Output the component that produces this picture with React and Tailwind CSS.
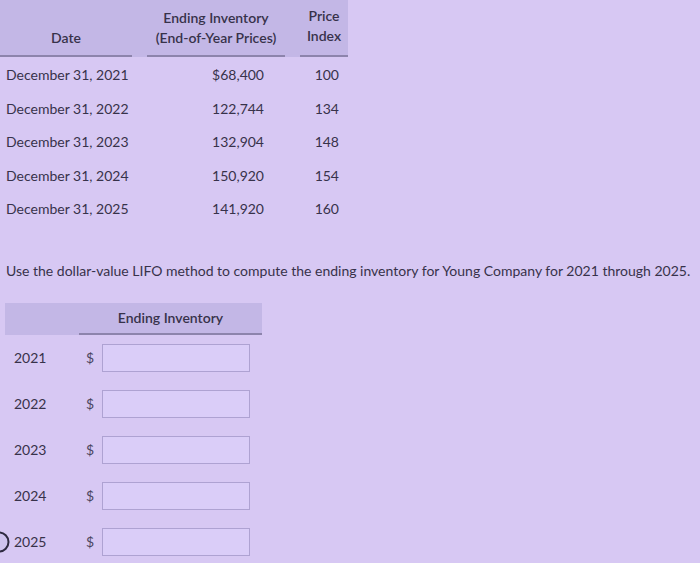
import React from "react";

const rows = [
  { date: "December 31, 2021", inv: "$68,400", idx: "100" },
  { date: "December 31, 2022", inv: "122,744", idx: "134" },
  { date: "December 31, 2023", inv: "132,904", idx: "148" },
  { date: "December 31, 2024", inv: "150,920", idx: "154" },
  { date: "December 31, 2025", inv: "141,920", idx: "160" },
];

const years = ["2021", "2022", "2023", "2024", "2025"];

function App() {
  return (
    <div
      className="w-[700px] h-[563px] bg-[#d7c8f3] text-[#37324a] text-[14px] overflow-hidden relative"
      style={{ fontFamily: "Lato, 'Open Sans', sans-serif" }}
    >
      {/* Top table */}
      <div className="w-[348px]">
        <div className="bg-[#c3b7e6] grid grid-cols-[132px_138px_48px] gap-x-[15px] h-[57px] font-semibold">
          <div className="flex items-end justify-center pb-[7px] border-b-2 border-[#8d84ac]">Date</div>
          <div className="flex flex-col items-center justify-end pb-[7px] leading-[20px] border-b-2 border-[#8d84ac]">
            <span>Ending Inventory</span>
            <span>(End-of-Year Prices)</span>
          </div>
          <div className="flex flex-col items-center justify-end pb-[9px] leading-[20px] border-b-2 border-[#8d84ac]">
            <span>Price</span>
            <span>Index</span>
          </div>
        </div>
        <div className="grid grid-cols-[132px_138px_48px] gap-x-[15px] pt-[1px]">
          {rows.map((r) => (
            <React.Fragment key={r.date}>
              <div className="h-[33.5px] flex items-center pl-[6px] whitespace-nowrap">{r.date}</div>
              <div className="h-[33.5px] flex items-center justify-end pr-[21px]">{r.inv}</div>
              <div className="h-[33.5px] flex items-center justify-end pr-[9px]">{r.idx}</div>
            </React.Fragment>
          ))}
        </div>
      </div>

      {/* Instruction */}
      <p className="mt-[34px] pl-[6px] whitespace-nowrap">
        Use the dollar-value LIFO method to compute the ending inventory for Young Company for 2021 through 2025.
      </p>

      {/* Bottom table */}
      <div className="mt-[22px] ml-[5px] w-[257px]">
        <div className="bg-[#c3b7e6] grid grid-cols-[74px_183px] h-[32px] font-semibold">
          <div></div>
          <div className="flex items-center justify-center border-b-2 border-[#8d84ac] pb-[1px]">Ending Inventory</div>
        </div>
        {years.map((y) => (
          <div key={y} className="h-[46px] flex items-center relative">
            <span className="w-[81px] pl-[9px]">{y}</span>
            <span className="w-[16px] text-[#4a4560]">$</span>
            <div className="w-[148px] h-[28px] border border-[#aea2d2] bg-[#dacdf8]"></div>
            {y === "2025" && (
              <svg className="absolute left-[-14px] top-[11px]" width="20" height="24" viewBox="0 0 20 24">
                <circle cx="8" cy="12" r="9.5" fill="#cfc3ee" stroke="#2e2a40" strokeWidth="2" />
              </svg>
            )}
          </div>
        ))}
      </div>
    </div>
  );
}

export default App;
